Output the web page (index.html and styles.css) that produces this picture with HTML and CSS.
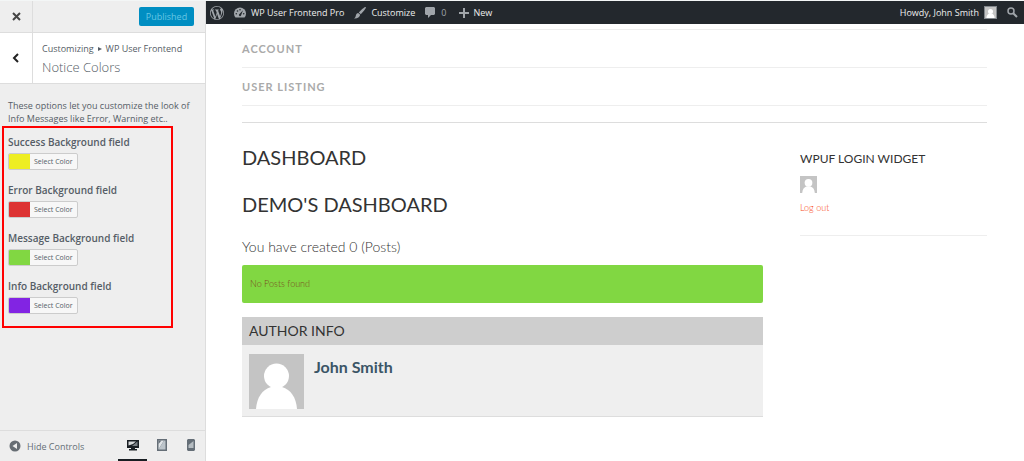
FILE: index.html
```html
<!DOCTYPE html>
<html lang="en">
<head>
<meta charset="utf-8">
<meta name="viewport" content="width=device-width, initial-scale=1">
<title>Customize: Notice Colors</title>
<link rel="stylesheet" href="styles.css">
</head>
<body>
<svg class="sprite" aria-hidden="true">
  <symbol id="avatar" viewBox="0 0 55 55">
    <path fill="#c4c4c4" d="M0 0h55v55H0z"/>
    <circle cx="27.500" cy="22" r="12.500" fill="#fff"/>
    <path fill="#fff" d="M7 55c1-12 6-19 15-22h11c9 3 14 10 15 22z"/>
  </symbol>
</svg>
<div class="customizer">
  <aside class="sidebar">
    <header class="top">
      <button class="cell close" aria-label="Close"><svg width="9" height="9" viewBox="0 0 9 9"><path d="M1 1l7 7M8 1L1 8" stroke="#444" stroke-width="2"/></svg></button>
      <div class="publish"><button class="published">Published</button></div>
    </header>
    <div class="heading">
      <button class="cell back" aria-label="Back"><svg width="8" height="10" viewBox="0 0 8 10"><path d="M6 1L2 5l4 4" fill="none" stroke="#222" stroke-width="2"/></svg></button>
      <div class="titles">
        <div class="crumbs">Customizing <svg class="tri" width="4" height="6" viewBox="0 0 4 6"><path d="M0 1l4 2-4 2z" fill="#555d66"/></svg> WP User Frontend</div>
        <h1>Notice Colors</h1>
      </div>
    </div>
    <p class="description">These options let you customize the look of Info Messages like Error, Warning etc..</p>
    <section class="fields">
      <div class="field"><label for="c1">Success Background field</label><button id="c1" class="picker"><span class="swatch yellow"></span><span class="caption">Select Color</span></button></div>
      <div class="field"><label for="c2">Error Background field</label><button id="c2" class="picker"><span class="swatch red"></span><span class="caption">Select Color</span></button></div>
      <div class="field"><label for="c3">Message Background field</label><button id="c3" class="picker"><span class="swatch green"></span><span class="caption">Select Color</span></button></div>
      <div class="field"><label for="c4">Info Background field</label><button id="c4" class="picker"><span class="swatch purple"></span><span class="caption">Select Color</span></button></div>
    </section>
    <footer class="controls">
      <button class="hide"><svg width="12" height="12" viewBox="0 0 12 12"><circle cx="6" cy="6" r="5.500" fill="#666d73"/><path d="M8 3v6L3.500 6z" fill="#eee"/></svg>Hide Controls</button>
      <div class="devices">
        <button class="device active" aria-label="Desktop"><svg width="12" height="12" viewBox="0 0 12 12"><path fill="#191e23" d="M0 1h12v8H8v1h2v1.500H2V10h2V9H0z"/><path fill="#d5d8da" d="M1.500 6.500V2.500H9l-3 2.500z"/><path fill="#7a8085" d="M5 7l5.500-4.500V7z"/></svg></button>
        <button class="device" aria-label="Tablet"><svg width="12" height="12" viewBox="0 0 12 12"><path fill="#656e77" d="M1 0h10v12H1z"/><path fill="#dfe3e6" d="M2.500 10.500v-9H8z"/><path fill="#bcc4ca" d="M2.500 10.500L8 1.500h1.500v9z"/><path fill="#656e77" d="M2.500 1.500h3l-3 3.500z"/></svg></button>
        <button class="device" aria-label="Mobile"><svg width="8" height="12" viewBox="0 0 8 12"><path fill="#656e77" d="M1 0h6l1 1v10l-1 1H1l-1-1V1z"/><path fill="#b5bcc1" d="M1.500 6l5-4v7h-5z"/></svg></button>
      </div>
    </footer>
  </aside>
  <div class="preview">
    <nav class="adminbar">
      <a class="item wp" href="#" aria-label="About WordPress"><svg width="14" height="14" viewBox="0 0 20 20"><path fill="#a0a5aa" d="M20 10c0-5.510-4.490-10-10-10C4.480 0 0 4.490 0 10c0 5.520 4.480 10 10 10 5.510 0 10-4.480 10-10zM7.780 15.370L4.370 6.220c.55-.02 1.170-.08 1.170-.08.5-.06.44-1.130-.06-1.110 0 0-1.450.11-2.370.11-.18 0-.37 0-.58-.01C4.120 2.690 6.870 1.110 10 1.110c2.330 0 4.450.87 6.050 2.340-.68-.11-1.650.39-1.650 1.580 0 .74.45 1.360.9 2.100.35.61.55 1.360.55 2.460 0 1.490-1.400 5-1.400 5l-3.030-8.370c.54-.02.82-.17.82-.17.5-.05.44-1.250-.06-1.220 0 0-1.440.12-2.380.12-.87 0-2.330-.12-2.330-.12-.5-.03-.56 1.200-.06 1.220l.92.08 1.260 3.410zM17.410 10c.24-.64.74-1.870.43-4.250.7 1.290 1.050 2.710 1.050 4.250 0 3.290-1.730 6.240-4.400 7.780.97-2.590 1.940-5.200 2.920-7.780zM6.100 18.090C3.120 16.650 1.110 13.530 1.110 10c0-1.300.23-2.480.72-3.590C3.250 10.300 4.670 14.200 6.100 18.090zm4.030-6.630l2.580 6.980c-.86.29-1.760.45-2.710.45-.79 0-1.570-.11-2.290-.33.81-2.380 1.620-4.740 2.420-7.100z"/></svg></a>
      <a class="item site" href="#"><svg width="12" height="12" viewBox="0 0 12 12"><path fill="#a0a5aa" d="M1.500 10.500a6 6 0 1 1 9 0z"/><g fill="#23282d"><circle cx="2.300" cy="6.800" r=".8"/><circle cx="3.500" cy="4" r=".8"/><circle cx="6" cy="2.800" r=".8"/><circle cx="9.700" cy="6.800" r=".8"/><path d="M9 3.300L7 8.500a1 1 0 0 1-2-1z"/></g></svg>WP User Frontend Pro</a>
      <a class="item" href="#"><svg width="12" height="12" viewBox="0 0 12 12"><path fill="#a0a5aa" d="M11.800.2c.4.500-.3 2-5 7L4.800 5.400C9.500.8 11.300-.2 11.800.200zM4.200 6l2 1.800C5.800 10.500 3 11.800 0 11.500c1.700-.8 1.500-2 2-3.500.4-1.200 1.200-1.800 2.200-2z"/></svg>Customize</a>
      <a class="item comments" href="#"><svg width="10" height="11" viewBox="0 0 10 11"><path fill="#a0a5aa" d="M1 0h8l1 1v6L9 8H6l-3 3V8H1L0 7V1z"/></svg>0</a>
      <a class="item" href="#"><svg width="10" height="10" viewBox="0 0 10 10"><path d="M5 0v10M0 5h10" stroke="#a0a5aa" stroke-width="2"/></svg>New</a>
      <a class="item account" href="#">Howdy, John Smith <svg class="framed" width="13" height="13"><use href="#avatar"/></svg></a>
      <button class="search" aria-label="Search"><svg width="11" height="11" viewBox="0 0 11 11"><circle cx="4" cy="4" r="3" fill="none" stroke="#a0a5aa" stroke-width="1.500"/><path d="M6.200 6.200L10 10" stroke="#a0a5aa" stroke-width="2"/></svg></button>
    </nav>
    <div class="page">
      <nav class="menu">
        <a href="#">Account</a>
        <a href="#">User Listing</a>
      </nav>
      <div class="columns">
        <main class="main">
          <h2>Dashboard</h2>
          <h2>Demo's Dashboard</h2>
          <p class="count">You have created 0 (Posts)</p>
          <div class="notice">No Posts found</div>
          <section class="author">
            <h3>Author Info</h3>
            <div class="card">
              <svg width="55" height="55"><use href="#avatar"/></svg>
              <strong>John Smith</strong>
            </div>
          </section>
        </main>
        <aside class="widget">
          <h4>WPUF Login Widget</h4>
          <svg width="17" height="17"><use href="#avatar"/></svg>
          <a href="#">Log out</a>
        </aside>
      </div>
    </div>
  </div>
</div>
</body>
</html>
```
FILE: styles.css
```css
* { box-sizing: border-box; }
body { margin: 0; background: #fff; font-family: "Open Sans", "Noto Sans", sans-serif; }
button { font: inherit; color: inherit; border: 0; background: none; padding: 0; cursor: pointer; }
a { text-decoration: none; }
svg { display: block; flex: none; }
h1, h2, h3, h4, p { margin: 0; font-weight: 400; }
.sprite { position: absolute; width: 0; height: 0; }

.customizer { display: flex; min-height: 100vh; border-top: 1px solid #f3f6f6; }

.sidebar { display: flex; flex-direction: column; flex: none; width: 206px; background: #eee; border-right: 1px solid #ddd; color: #555d66; font-size: 9px; }
.top, .heading { display: flex; border-bottom: 1px solid #ddd; }
.top { height: 32px; }
.cell { display: flex; align-items: center; justify-content: center; flex: none; width: 33px; border-right: 1px solid #ddd; }
.publish { display: flex; flex: 1; align-items: center; justify-content: flex-end; padding-right: 11px; }
.published { width: 55px; height: 19px; border-radius: 2px; background: #008ec2; color: #66c6e4; line-height: 19px; }
.heading { height: 51px; background: #fff; }
.titles { padding: 8px 9px; }
.crumbs { display: flex; align-items: center; gap: 4px; line-height: 16px; white-space: nowrap; }
.titles h1 { font-size: 13px; line-height: 20px; font-weight: 300; }
.description { padding: 15px 12px 0 8px; line-height: 13px; }
.fields { display: flex; flex-direction: column; gap: 13px; width: 171px; margin: 1px 0 0 2px; padding: 7px 4px 12px; border: 2px solid #f00; }
.field { display: flex; flex-direction: column; align-items: flex-start; gap: 4px; }
.field label { font-size: 10px; line-height: 14px; font-weight: 600; }
.picker { display: flex; height: 17px; border: 1px solid #ccc; border-radius: 2px; background: #f7f7f7; overflow: hidden; }
.swatch { width: 21px; height: 15px; }
.caption { padding: 0 4px; font-size: 7px; line-height: 15px; }
.yellow { background: #eeee22; }
.red { background: #dd3333; }
.green { background: #81d742; }
.purple { background: #8224e3; }
.controls { display: flex; justify-content: space-between; height: 31px; margin-top: auto; padding: 0 0 0 9px; border-top: 1px solid #ddd; }
.hide { display: flex; align-items: center; gap: 6px; color: #656e77; }
.devices { display: flex; }
.device { display: flex; align-items: center; justify-content: center; width: 29px; border-bottom: 2px solid transparent; }
.active { border-color: #191e23; }

.preview { flex: 1; min-width: 0; font-family: Lato, sans-serif; }
.adminbar { display: flex; align-items: center; gap: 10px; height: 23px; padding: 0 6px 0 4px; background: #23282d; color: #eee; font-family: "Open Sans", sans-serif; font-size: 9px; }
.item { display: flex; align-items: center; gap: 5px; color: #eee; white-space: nowrap; }
.comments { gap: 6px; margin-right: 2px; color: #a0a5aa; }
.account { margin-left: auto; }
.framed { border: 1px solid #82878c; }
.page { padding: 5px 37px 0 36px; }
.menu { border-top: 1px solid #eee; padding-bottom: 16px; border-bottom: 1px solid #ddd; }
.menu a { display: block; border-bottom: 1px solid #eee; color: #aaa; font-size: 11px; font-weight: 700; line-height: 37px; letter-spacing: 1px; text-transform: uppercase; }
.columns { display: grid; grid-template-columns: 521fr 187fr; gap: 37px; color: #333; }
.main { padding-top: 20px; }
.main h2 { margin-bottom: 19px; font-size: 20px; line-height: 28px; text-transform: uppercase; }
.count { font-size: 14px; line-height: 20px; font-weight: 300; }
.notice { margin: 8px 0 14px; padding: 0 8px; border-radius: 2px; background: #81d742; color: #7a4a20; font-size: 9px; font-weight: 300; line-height: 38px; }
.author h3 { padding: 0 7px; background: #cecece; font-size: 14px; line-height: 28px; text-transform: uppercase; }
.card { display: flex; gap: 10px; padding: 9px 7px 7px; background: #efefef; border-bottom: 1px solid #ddd; }
.card strong { color: #3b5566; font-size: 16px; line-height: 26px; }
.widget { align-self: start; margin-top: 27px; padding-bottom: 20px; border-bottom: 1px solid #eee; }
.widget h4 { margin-bottom: 8px; font-size: 12px; line-height: 18px; text-transform: uppercase; }
.widget a { display: block; margin-top: 8px; color: #f84a20; font-size: 9px; font-weight: 300; line-height: 14px; }
```
